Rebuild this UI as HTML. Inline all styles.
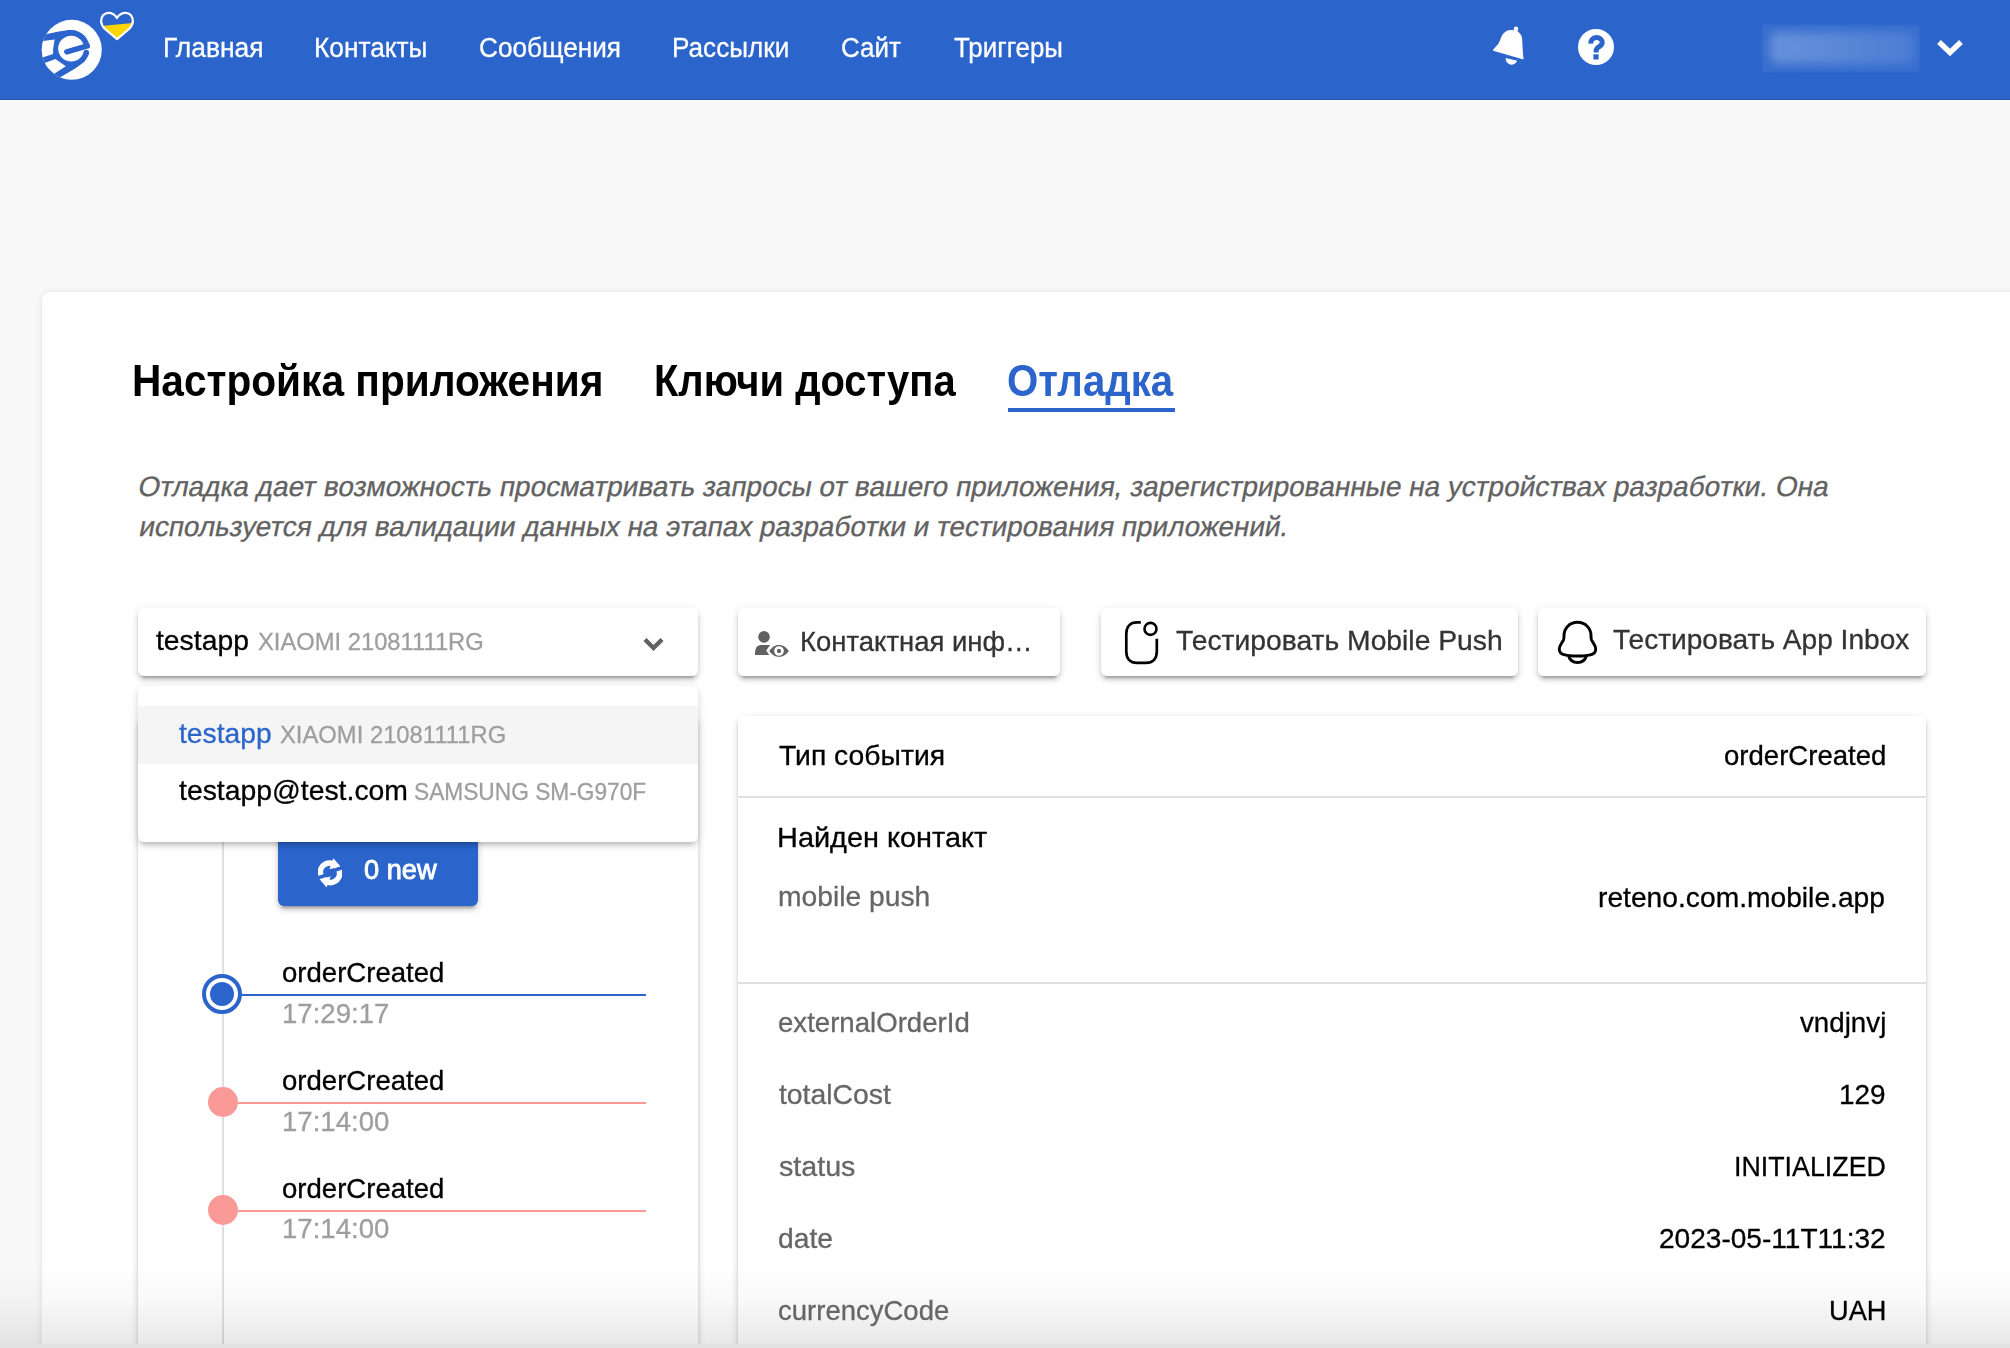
<!DOCTYPE html>
<html><head><meta charset="utf-8"><style>
html,body{margin:0;padding:0;}
body{width:2010px;height:1348px;overflow:hidden;background:#f9f9f9;position:relative;font-family:"Liberation Sans",sans-serif;}
.t{position:absolute;white-space:nowrap;line-height:1;transform-origin:0 0;}
.abs{position:absolute;}
#hdr{position:absolute;left:0;top:0;width:2010px;height:100px;background:#2b65cc;}
#card{position:absolute;left:42px;top:292px;width:2100px;height:1200px;background:#fff;border-radius:8px;box-shadow:0 1px 9px rgba(0,0,0,0.09),0 0 2px rgba(0,0,0,0.07);}
.paper{position:absolute;background:#fff;border-radius:6px;box-shadow:0 6px 2px -4px rgba(0,0,0,.2),0 4px 4px 0 rgba(0,0,0,.14),0 2px 10px 0 rgba(0,0,0,.12);}
</style></head><body>
<div id="hdr"></div>
<div class="abs" style="left:0;top:99px;width:2010px;height:1px;background:#2a5ab4"></div>
<div id="card"></div>
<!-- left panel -->
<div class="paper" style="left:138px;top:716px;width:560px;height:800px;"></div>
<!-- timeline vertical line -->
<div class="abs" style="left:222px;top:842px;width:2px;height:520px;background:#e0e0e0"></div>
<!-- right panel -->
<div class="paper" style="left:738px;top:716px;width:1188px;height:800px;"></div>
<div class="abs" style="left:738px;top:796px;width:1188px;height:2px;background:#e0e0e0"></div>
<div class="abs" style="left:738px;top:982px;width:1188px;height:2px;background:#e0e0e0"></div>
<!-- select -->
<div class="paper" style="left:138px;top:608px;width:560px;height:68px;"></div>
<!-- buttons -->
<div class="paper" style="left:738px;top:608px;width:322px;height:68px;"></div>
<div class="paper" style="left:1101px;top:608px;width:417px;height:68px;"></div>
<div class="paper" style="left:1538px;top:608px;width:388px;height:68px;"></div>
<!-- 0 new button -->
<div class="abs" style="left:278px;top:820px;width:200px;height:86px;background:#2b65cc;border-radius:6px;box-shadow:0 6px 2px -4px rgba(0,0,0,.2),0 4px 4px 0 rgba(0,0,0,.14),0 2px 10px 0 rgba(0,0,0,.12);"></div>
<!-- dropdown -->
<div class="paper" style="left:138px;top:686px;width:560px;height:156px;box-shadow:0 6px 4px -4px rgba(0,0,0,.16),0 4px 6px 0 rgba(0,0,0,.09),0 2px 12px 0 rgba(0,0,0,.09);"></div>
<div class="abs" style="left:138px;top:706px;width:560px;height:58px;background:#f5f5f5"></div>
<!-- underline -->
<div class="abs" style="left:1008px;top:408px;width:167px;height:4px;background:#2b65cc"></div>
<!-- timeline dots -->
<div class="abs" style="left:242px;top:994px;width:404px;height:2px;background:#2b65cc"></div>
<div class="abs" style="left:202px;top:974px;width:32px;height:32px;border:4px solid #2b65cc;border-radius:50%;background:#fff"></div>
<div class="abs" style="left:210px;top:982px;width:24px;height:24px;border-radius:50%;background:#2b65cc"></div>
<div class="abs" style="left:238px;top:1102px;width:408px;height:2px;background:#f99a96"></div>
<div class="abs" style="left:208px;top:1087px;width:30px;height:30px;border-radius:50%;background:#fa9a96"></div>
<div class="abs" style="left:238px;top:1210px;width:408px;height:2px;background:#f99a96"></div>
<div class="abs" style="left:208px;top:1195px;width:30px;height:30px;border-radius:50%;background:#fa9a96"></div>
<!-- bottom fade -->
<div class="abs" style="left:0;top:1266px;width:2010px;height:78px;background:linear-gradient(rgba(0,0,0,0),rgba(0,0,0,0.03) 50%,rgba(0,0,0,0.09))"></div>
<div class="t" style="left:163.04px;top:34.50px;font-size:27px;font-weight:normal;font-style:normal;color:#ffffff;-webkit-text-stroke:0.3px #ffffff;transform-origin:0 0;transform:scaleX(0.9784)">Главная</div>
<div class="t" style="left:314.46px;top:34.50px;font-size:27px;font-weight:normal;font-style:normal;color:#ffffff;-webkit-text-stroke:0.3px #ffffff;transform-origin:0 0;transform:scaleX(0.9725)">Контакты</div>
<div class="t" style="left:479.03px;top:34.50px;font-size:27px;font-weight:normal;font-style:normal;color:#ffffff;-webkit-text-stroke:0.3px #ffffff;transform-origin:0 0;transform:scaleX(0.9686)">Сообщения</div>
<div class="t" style="left:671.66px;top:34.50px;font-size:27px;font-weight:normal;font-style:normal;color:#ffffff;-webkit-text-stroke:0.3px #ffffff;transform-origin:0 0;transform:scaleX(0.9678)">Рассылки</div>
<div class="t" style="left:840.84px;top:34.50px;font-size:27px;font-weight:normal;font-style:normal;color:#ffffff;-webkit-text-stroke:0.3px #ffffff;transform-origin:0 0;transform:scaleX(0.9606)">Сайт</div>
<div class="t" style="left:953.60px;top:34.50px;font-size:27px;font-weight:normal;font-style:normal;color:#ffffff;-webkit-text-stroke:0.3px #ffffff;transform-origin:0 0;transform:scaleX(0.9589)">Триггеры</div>
<div class="t" style="left:132.05px;top:358.80px;font-size:44px;font-weight:bold;font-style:normal;color:#000;transform-origin:0 0;transform:scaleX(0.9237)">Настройка приложения</div>
<div class="t" style="left:653.89px;top:358.80px;font-size:44px;font-weight:bold;font-style:normal;color:#000;transform-origin:0 0;transform:scaleX(0.9075)">Ключи доступа</div>
<div class="t" style="left:1007.29px;top:358.80px;font-size:44px;font-weight:bold;font-style:normal;color:#2b65cc;transform-origin:0 0;transform:scaleX(0.9126)">Отладка</div>
<div class="t" style="left:136.60px;top:473.30px;font-size:28px;font-weight:normal;font-style:normal;color:#626262;-webkit-text-stroke:0.3px #626262;transform-origin:0 23.00px;transform:scaleX(0.9992) skewX(-11deg)">Отладка дает возможность просматривать запросы от вашего приложения, зарегистрированные на устройствах разработки. Она</div>
<div class="t" style="left:138.00px;top:512.80px;font-size:28px;font-weight:normal;font-style:normal;color:#626262;-webkit-text-stroke:0.3px #626262;transform-origin:0 23.00px;transform:scaleX(0.9953) skewX(-11deg)">используется для валидации данных на этапах разработки и тестирования приложений.</div>
<div class="t" style="left:156.10px;top:627.00px;font-size:28px;font-weight:normal;font-style:normal;color:#000;-webkit-text-stroke:0.3px #000;transform-origin:0 0;transform:scaleX(1.0112)">testapp</div>
<div class="t" style="left:257.90px;top:630.00px;font-size:24px;font-weight:normal;font-style:normal;color:#9e9e9e;-webkit-text-stroke:0.3px #9e9e9e;transform-origin:0 0;transform:scaleX(0.9896)">XIAOMI 21081111RG</div>
<div class="t" style="left:178.70px;top:720.10px;font-size:28px;font-weight:normal;font-style:normal;color:#2b65cc;-webkit-text-stroke:0.3px #2b65cc;transform-origin:0 0;transform:scaleX(1.0079)">testapp</div>
<div class="t" style="left:280.00px;top:723.10px;font-size:24px;font-weight:normal;font-style:normal;color:#9e9e9e;-webkit-text-stroke:0.3px #9e9e9e;transform-origin:0 0;transform:scaleX(0.9914)">XIAOMI 21081111RG</div>
<div class="t" style="left:178.70px;top:777.30px;font-size:28px;font-weight:normal;font-style:normal;color:#000;-webkit-text-stroke:0.3px #000;transform-origin:0 0;transform:scaleX(1.0127)">testapp@test.com</div>
<div class="t" style="left:414.05px;top:780.30px;font-size:24px;font-weight:normal;font-style:normal;color:#9e9e9e;-webkit-text-stroke:0.3px #9e9e9e;transform-origin:0 0;transform:scaleX(0.9462)">SAMSUNG SM-G970F</div>
<div class="t" style="left:363.93px;top:856.20px;font-size:28px;font-weight:normal;font-style:normal;color:#ffffff;-webkit-text-stroke:0.9px #ffffff;transform-origin:0 0;transform:scaleX(0.9719)">0 new</div>
<div class="t" style="left:282.42px;top:959.10px;font-size:28px;font-weight:normal;font-style:normal;color:#000;-webkit-text-stroke:0.3px #000;transform-origin:0 0;transform:scaleX(0.9840)">orderCreated</div>
<div class="t" style="left:282.03px;top:999.50px;font-size:28px;font-weight:normal;font-style:normal;color:#9e9e9e;-webkit-text-stroke:0.3px #9e9e9e;transform-origin:0 0;transform:scaleX(0.9848)">17:29:17</div>
<div class="t" style="left:282.42px;top:1067.40px;font-size:28px;font-weight:normal;font-style:normal;color:#000;-webkit-text-stroke:0.3px #000;transform-origin:0 0;transform:scaleX(0.9840)">orderCreated</div>
<div class="t" style="left:282.03px;top:1107.50px;font-size:28px;font-weight:normal;font-style:normal;color:#9e9e9e;-webkit-text-stroke:0.3px #9e9e9e;transform-origin:0 0;transform:scaleX(0.9848)">17:14:00</div>
<div class="t" style="left:282.42px;top:1175.10px;font-size:28px;font-weight:normal;font-style:normal;color:#000;-webkit-text-stroke:0.3px #000;transform-origin:0 0;transform:scaleX(0.9840)">orderCreated</div>
<div class="t" style="left:282.03px;top:1215.30px;font-size:28px;font-weight:normal;font-style:normal;color:#9e9e9e;-webkit-text-stroke:0.3px #9e9e9e;transform-origin:0 0;transform:scaleX(0.9848)">17:14:00</div>
<div class="t" style="left:800.14px;top:627.50px;font-size:28px;font-weight:normal;font-style:normal;color:#333333;-webkit-text-stroke:0.3px #333333;transform-origin:0 0;transform:scaleX(0.9817)">Контактная инф…</div>
<div class="t" style="left:1176.10px;top:626.50px;font-size:28px;font-weight:normal;font-style:normal;color:#333333;-webkit-text-stroke:0.3px #333333;transform-origin:0 0;transform:scaleX(1.0098)">Тестировать Mobile Push</div>
<div class="t" style="left:1613.00px;top:626.00px;font-size:28px;font-weight:normal;font-style:normal;color:#333333;-webkit-text-stroke:0.3px #333333;transform-origin:0 0;transform:scaleX(1.0026)">Тестировать App Inbox</div>
<div class="t" style="left:778.70px;top:741.60px;font-size:28px;font-weight:normal;font-style:normal;color:#000;-webkit-text-stroke:0.3px #000;transform-origin:0 0;transform:scaleX(1.0119)">Тип события</div>
<div class="t" style="left:1723.82px;top:741.50px;font-size:28px;font-weight:normal;font-style:normal;color:#000;-webkit-text-stroke:0.3px #000;transform-origin:0 0;transform:scaleX(0.9840)">orderCreated</div>
<div class="t" style="left:777.23px;top:823.70px;font-size:28px;font-weight:normal;font-style:normal;color:#000;-webkit-text-stroke:0.3px #000;transform-origin:0 0;transform:scaleX(1.0325)">Найден контакт</div>
<div class="t" style="left:778.29px;top:883.10px;font-size:28px;font-weight:normal;font-style:normal;color:#666666;-webkit-text-stroke:0.3px #666666;transform-origin:0 0;transform:scaleX(1.0087)">mobile push</div>
<div class="t" style="left:1598.19px;top:883.50px;font-size:28px;font-weight:normal;font-style:normal;color:#000;-webkit-text-stroke:0.3px #000;transform-origin:0 0;transform:scaleX(1.0076)">reteno.com.mobile.app</div>
<div class="t" style="left:778.01px;top:1009.00px;font-size:28px;font-weight:normal;font-style:normal;color:#666666;-webkit-text-stroke:0.3px #666666;transform-origin:0 0;transform:scaleX(0.9856)">externalOrderId</div>
<div class="t" style="left:1799.60px;top:1009.00px;font-size:28px;font-weight:normal;font-style:normal;color:#000;-webkit-text-stroke:0.3px #000;transform-origin:0 0;transform:scaleX(0.9903)">vndjnvj</div>
<div class="t" style="left:779.00px;top:1080.80px;font-size:28px;font-weight:normal;font-style:normal;color:#666666;-webkit-text-stroke:0.3px #666666;transform-origin:0 0;transform:scaleX(1.0116)">totalCost</div>
<div class="t" style="left:1838.71px;top:1080.80px;font-size:28px;font-weight:normal;font-style:normal;color:#000;-webkit-text-stroke:0.3px #000;transform-origin:0 0;transform:scaleX(0.9967)">129</div>
<div class="t" style="left:779.00px;top:1152.80px;font-size:28px;font-weight:normal;font-style:normal;color:#666666;-webkit-text-stroke:0.3px #666666;transform-origin:0 0;transform:scaleX(1.0230)">status</div>
<div class="t" style="left:1733.99px;top:1152.80px;font-size:28px;font-weight:normal;font-style:normal;color:#000;-webkit-text-stroke:0.3px #000;transform-origin:0 0;transform:scaleX(0.9571)">INITIALIZED</div>
<div class="t" style="left:777.99px;top:1224.90px;font-size:28px;font-weight:normal;font-style:normal;color:#666666;-webkit-text-stroke:0.3px #666666;transform-origin:0 0;transform:scaleX(1.0090)">date</div>
<div class="t" style="left:1658.60px;top:1224.90px;font-size:28px;font-weight:normal;font-style:normal;color:#000;-webkit-text-stroke:0.3px #000;transform-origin:0 0;transform:scaleX(1.0019)">2023-05-11T11:32</div>
<div class="t" style="left:778.02px;top:1296.70px;font-size:28px;font-weight:normal;font-style:normal;color:#666666;-webkit-text-stroke:0.3px #666666;transform-origin:0 0;transform:scaleX(0.9825)">currencyCode</div>
<div class="t" style="left:1829.46px;top:1296.70px;font-size:28px;font-weight:normal;font-style:normal;color:#000;-webkit-text-stroke:0.3px #000;transform-origin:0 0;transform:scaleX(0.9709)">UAH</div>
<!-- logo -->
<svg class="abs" style="left:38px;top:16px" width="70" height="70" viewBox="0 0 1348 1348">
 <defs><clipPath id="lc"><circle cx="650" cy="652" r="578"/></clipPath></defs>
 <circle cx="650" cy="652" r="578" fill="#fff"/>
 <g clip-path="url(#lc)">
  <circle cx="640" cy="625" r="355" fill="#2b65cc"/>
  <polygon points="0,372 150,350 400,300 640,265 640,700 975.8,730 895.7,878.5 724.3,1004.3 438.6,1175.7 0,1348" fill="#2b65cc"/>
  <circle cx="638" cy="628" r="250" fill="#fff"/>
  <polygon points="638,628 1132,541 1125,749" fill="#fff"/>
  <polygon points="40,488 322,452 302,560 292,640 290,730 40,815" fill="#fff"/>
  <polygon points="90,918 335.7,827 535.7,970 312.8,1112.9" fill="#fff"/>
  <line x1="555" y1="690" x2="950" y2="576" stroke="#2b65cc" stroke-width="105" stroke-linecap="round"/>
  <circle cx="930" cy="701" r="52" fill="#2b65cc"/>
 </g>
</svg>
<!-- heart -->
<svg class="abs" style="left:99px;top:11px" width="37" height="31" viewBox="0 0 37 31">
 <defs><clipPath id="hc"><path d="M17.9 7 C16 3.6 13 1.9 9.5 1.9 C5 1.9 2.1 5.5 2.1 10 C2.1 13 3.6 15.6 6 18 L18.1 28.2 L30 18 C32.4 15.6 33.9 13 33.9 10 C33.9 5.5 31 1.9 26.6 1.9 C23 1.9 20 3.6 17.9 7 Z"/></clipPath></defs>
 <g clip-path="url(#hc)"><rect x="0" y="0" width="37" height="31" fill="#2b65cc"/><polygon points="0,15.3 37,11.6 37,31 0,31" fill="#ffd500"/></g>
 <path d="M17.9 7 C16 3.6 13 1.9 9.5 1.9 C5 1.9 2.1 5.5 2.1 10 C2.1 13 3.6 15.6 6 18 L18.1 28.2 L30 18 C32.4 15.6 33.9 13 33.9 10 C33.9 5.5 31 1.9 26.6 1.9 C23 1.9 20 3.6 17.9 7 Z" fill="none" stroke="#fff" stroke-width="2.2" stroke-linejoin="round"/>
</svg>
<!-- header bell -->
<svg class="abs" style="left:1480px;top:20px" width="60" height="52" viewBox="1480 20 60 52">
 <path d="M1493.1 50.7 L1493.1 49.8 C1495 47.5 1497.5 45 1498.6 43.2 C1499.7 41.3 1500.5 39 1501.3 37 C1502.5 34 1504 32.5 1505.1 31.9 C1506.5 30.8 1508.3 30 1510.2 30 C1512.5 29.8 1514.5 30 1516 30.5 C1517.5 31.2 1519 32.3 1519.7 33.3 C1520.8 34.5 1521.4 35.6 1521.8 36.7 C1522.3 39 1522.4 43 1522.5 45.9 C1522.7 50 1523.2 56 1523.5 59.5 Z" fill="#fff"/>
 <circle cx="1516" cy="28.9" r="2.3" fill="#fff"/>
 <path d="M1505.7 57.9 A5.9 5.9 0 0 0 1517.1 60.7 Z" fill="#fff"/>
</svg>
<!-- help -->
<div class="abs" style="left:1578px;top:29px;width:36px;height:36px;border-radius:50%;background:#fff"></div>
<svg class="abs" style="left:1578px;top:29px" width="36" height="36" viewBox="1578 29 36 36">
 <path d="M1590.6 43.6 C1590.8 39.8 1593.5 37.6 1596.5 37.6 C1599.5 37.6 1602.2 39.6 1602.2 42.8 C1602.2 46.5 1596.2 47.2 1596.2 50.2 L1596.2 52.6" fill="none" stroke="#2b65cc" stroke-width="5"/>
 <rect x="1593.4" y="54.3" width="5.2" height="5.2" fill="#2b65cc"/>
</svg>
<!-- blurred name -->
<div class="abs" style="left:1762px;top:25px;width:158px;height:47px;background:rgba(255,255,255,0.06);filter:blur(1px)"></div>
<div class="abs" style="left:1770px;top:32px;width:144px;height:32px;background:linear-gradient(to right,rgba(255,255,255,0.24),rgba(255,255,255,0.18) 50%,rgba(255,255,255,0.1));filter:blur(5px);border-radius:8px"></div>
<!-- header chevron -->
<svg class="abs" style="left:1930px;top:34px" width="40" height="28" viewBox="0 0 40 28">
 <polyline points="9,8 20,18.5 31,8" fill="none" stroke="#fff" stroke-width="5.4"/>
</svg>
<!-- select chevron -->
<svg class="abs" style="left:636px;top:630px" width="36" height="28" viewBox="0 0 36 28">
 <polyline points="9,9.5 17.5,18 26,9.5" fill="none" stroke="#616161" stroke-width="4.4"/>
</svg>
<!-- person eye -->
<svg class="abs" style="left:750px;top:626px" width="44" height="36" viewBox="750 626 44 36">
 <circle cx="764" cy="636.9" r="5.8" fill="#616161"/>
 <path d="M755 655 C755 648.5 756.5 645 761 645 L770.2 645 L766.2 650.5 L769.3 655 Z" fill="#616161"/>
 <path d="M769.2 651 C772.5 646.5 775.5 645 779 645 C782.5 645 785.5 646.5 788.9 651 C785.5 655.5 782.5 656.8 779 656.8 C775.5 656.8 772.5 655.5 769.2 651 Z" fill="#616161"/>
 <circle cx="779" cy="651" r="3.4" fill="none" stroke="#fff" stroke-width="2.9"/>
 <circle cx="779" cy="651" r="1.9" fill="#616161"/>
</svg>
<!-- phone icon -->
<svg class="abs" style="left:1122px;top:618px" width="40" height="50" viewBox="-3 -3 40 50">
 <path d="M15.8 1.4 L12 1.4 C5.5 1.4 1.3 5.5 1.3 12.5 L1.3 30.5 C1.3 37.5 5 41.9 12 41.9 L21 41.9 C28 41.9 31.8 37.5 31.8 30.5 L31.8 17.7" fill="none" stroke="#000" stroke-width="2.7" stroke-linecap="butt"/>
 <circle cx="25.5" cy="7.9" r="6" fill="none" stroke="#000" stroke-width="2.6"/>
</svg>
<!-- inbox bell -->
<svg class="abs" style="left:1555px;top:618px" width="46" height="50" viewBox="-3 -3 46 50">
 <path d="M19.5 1.3 C11 1.3 6 8 6 14.5 C6 17 5.5 19.5 4.9 20 C3.5 22.5 1.3 25 1.3 28 C1.3 31 2.5 32.5 5 33.3 C9 34.6 14 35 19.5 35 C25 35 30 34.6 34 33.3 C36.5 32.5 37.7 31 37.7 28 C37.7 25 35.5 22.5 34.1 20 C33.5 19.5 33 17 33 14.5 C33 8 28 1.3 19.5 1.3 Z" fill="none" stroke="#000" stroke-width="2.9"/>
 <path d="M10.6 35 C12 39.5 15.5 41.5 19.5 41.5 C23.5 41.5 27 39.5 28.4 35" fill="none" stroke="#000" stroke-width="2.9"/>
</svg>
<!-- refresh icon -->
<svg class="abs" style="left:318px;top:857.8px" width="24" height="30" viewBox="0 0 24 30">
 <g fill="#fff">
  <path d="M2.8 17 A9.2 9.2 0 0 1 19.05 8.89" fill="none" stroke="#fff" stroke-width="5.7"/>
  <polygon points="15.4,0.2 22.4,8.6 11.4,11.2"/>
  <g transform="rotate(180 12 14.8)">
   <path d="M2.8 17 A9.2 9.2 0 0 1 19.05 8.89" fill="none" stroke="#fff" stroke-width="5.7"/>
   <polygon points="15.4,0.2 22.4,8.6 11.4,11.2"/>
  </g>
 </g>
</svg>

<div class="abs" style="left:0;top:1344px;width:2010px;height:4px;background:#e2e2e2"></div>
</body></html>
